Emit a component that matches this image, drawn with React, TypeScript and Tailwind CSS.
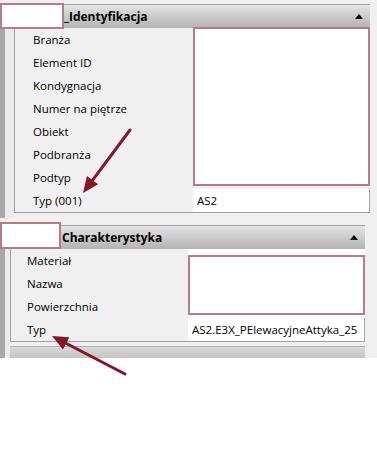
import React from 'react'

const FONT = { fontFamily: '"Open Sans", "Noto Sans", Arial, sans-serif' }

const topRows = ['Branża', 'Element ID', 'Kondygnacja', 'Numer na piętrze', 'Obiekt', 'Podbranża', 'Podtyp', 'Typ (001)']
const bottomRows = ['Materiał', 'Nazwa', 'Powierzchnia', 'Typ']

function Caret() {
  return (
    <svg width="8" height="5" viewBox="0 0 8 5" className="shrink-0">
      <path d="M0 5 L4 0 L8 5 Z" fill="#000" />
    </svg>
  )
}

function Header({ title, indent }: { title: string; indent: string }) {
  return (
    <div className="flex items-center h-[24px] border-t border-[#a3a3a3] bg-gradient-to-b from-[#e4e4e4] to-[#b3b3b3] pr-[7px]">
      <span className={`flex-1 text-[12px] font-bold text-black leading-none ${indent}`}>{title}</span>
      <Caret />
    </div>
  )
}

function Redact({ className }: { className: string }) {
  return <div className={`absolute bg-white border-2 border-[#b77a86] ${className}`} />
}

function Arrow({ x1, y1, x2, y2 }: { x1: number; y1: number; x2: number; y2: number }) {
  const a = Math.atan2(y2 - y1, x2 - x1)
  const len = 16
  const w = 7
  const bx = x2 - Math.cos(a) * len
  const by = y2 - Math.sin(a) * len
  const px = -Math.sin(a) * w
  const py = Math.cos(a) * w
  return (
    <>
      <line x1={x1} y1={y1} x2={bx + Math.cos(a) * 3} y2={by + Math.sin(a) * 3} stroke="#861728" strokeWidth="3" strokeLinecap="round" />
      <polygon points={`${x2},${y2} ${bx + px},${by + py} ${bx - px},${by - py}`} fill="#861728" />
    </>
  )
}

export default function App() {
  return (
    <div className="relative w-[377px] h-[459px] bg-white overflow-hidden" style={FONT}>
      {/* first capture */}
      <div className="flex h-[218px] bg-[#f0f0f0] pt-[4px]">
        <div className="w-[5px] bg-[#a8a8a8]" />
        <div className="w-[9px] bg-[#ececec]" />
        <div className="flex flex-col w-[356px]">
          <div className="-ml-[14px]">
            <Header title="_Identyfikacja" indent="pl-[64px]" />
          </div>
          <div className="flex border-l border-b border-[#a0a0a0]">
            <div className="w-[178px] flex flex-col">
              {topRows.map((r) => (
                <div key={r} className="h-[23px] flex items-center pl-[18px] text-[11.5px] text-black">
                  {r}
                </div>
              ))}
            </div>
            <div className="flex-1 flex flex-col">
              <div className="h-[161px] pb-[2px]">
                <div className="h-full bg-white border-2 border-[#b77a86] -mt-[1px]" />
              </div>
              <div className="h-[23px] flex items-center bg-white border-r border-[#a8a8a8] pl-[4px] text-[11.5px] text-black">
                AS2
              </div>
            </div>
          </div>
        </div>
      </div>

      {/* second capture */}
      <div className="flex h-[140px] bg-[#f0f0f0] pt-[7px]">
        <div className="w-[5px] bg-[#a8a8a8]" />
        <div className="w-[5px] bg-[#ececec]" />
        <div className="flex flex-col w-[355px]">
          <div className="-ml-[10px]">
            <Header title="Charakterystyka" indent="pl-[62px]" />
          </div>
          <div className="flex border-l border-b border-[#a0a0a0]">
            <div className="w-[177px] flex flex-col">
              {bottomRows.map((r) => (
                <div key={r} className="h-[23px] flex items-center pl-[16px] text-[11.5px] text-black">
                  {r}
                </div>
              ))}
            </div>
            <div className="flex-1 flex flex-col">
              <div className="h-[69px] bg-white pt-[6px] pb-[3px]">
                <div className="h-full border-2 border-[#b77a86]" />
              </div>
              <div className="h-[23px] flex items-center bg-white border-r border-[#a8a8a8] pl-[4px] text-[11.5px] text-black">
                AS2.E3X_PElewacyjneAttyka_25
              </div>
            </div>
          </div>
          <div className="mt-[4px] h-[12px] bg-gradient-to-b from-[#d8d8d8] to-[#c4c4c4] border-t border-[#b0b0b0]" />
        </div>
      </div>

      <Redact className="left-0 top-[3px] w-[64px] h-[26px]" />
      <Redact className="left-0 top-[222px] w-[61px] h-[27px]" />

      <svg className="absolute inset-0 pointer-events-none" width="377" height="459">
        <Arrow x1={130} y1={130} x2={83} y2={193} />
        <Arrow x1={125} y1={374} x2={52} y2={336} />
      </svg>
    </div>
  )
}
